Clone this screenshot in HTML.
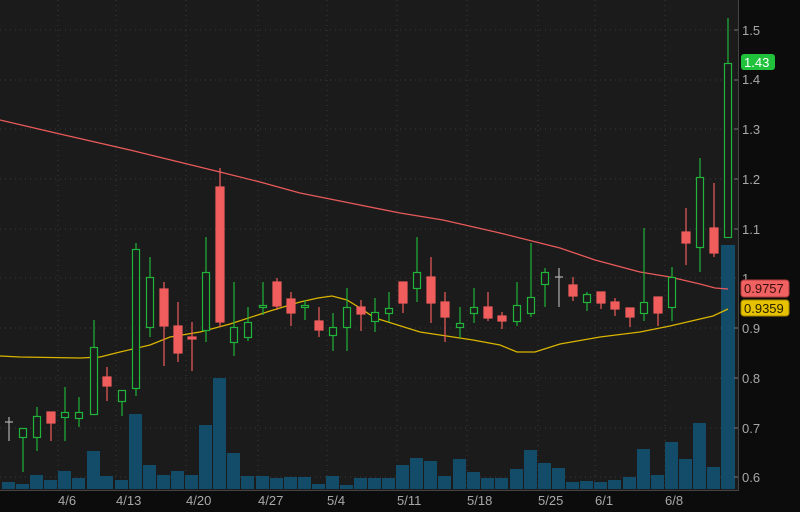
<!DOCTYPE html>
<html><head><meta charset="utf-8"><style>
html,body{margin:0;padding:0;background:#1b1b1b;}
svg{display:block;font-family:"Liberation Sans",sans-serif;}
</style></head><body>
<svg width="800" height="512" viewBox="0 0 800 512" xmlns="http://www.w3.org/2000/svg">
<rect x="0" y="0" width="800" height="512" fill="#1b1b1b"/>
<rect x="738" y="0" width="62" height="512" fill="#0c0c0c"/>
<rect x="0" y="490" width="800" height="22" fill="#0c0c0c"/>
<g stroke="#3a3a3a" stroke-width="1" stroke-dasharray="1,4">
<line x1="0" y1="30" x2="738" y2="30"/><line x1="0" y1="80" x2="738" y2="80"/><line x1="0" y1="129" x2="738" y2="129"/><line x1="0" y1="179" x2="738" y2="179"/><line x1="0" y1="229" x2="738" y2="229"/><line x1="0" y1="278" x2="738" y2="278"/><line x1="0" y1="328" x2="738" y2="328"/><line x1="0" y1="378" x2="738" y2="378"/><line x1="0" y1="428" x2="738" y2="428"/><line x1="0" y1="477" x2="738" y2="477"/>
<line x1="58" y1="0" x2="58" y2="490"/><line x1="116" y1="0" x2="116" y2="490"/><line x1="186" y1="0" x2="186" y2="490"/><line x1="258" y1="0" x2="258" y2="490"/><line x1="327" y1="0" x2="327" y2="490"/><line x1="397" y1="0" x2="397" y2="490"/><line x1="467" y1="0" x2="467" y2="490"/><line x1="538" y1="0" x2="538" y2="490"/><line x1="595" y1="0" x2="595" y2="490"/><line x1="665" y1="0" x2="665" y2="490"/>
</g>
<line x1="738.5" y1="0" x2="738.5" y2="490" stroke="#444"/>
<line x1="0" y1="490.5" x2="739" y2="490.5" stroke="#444"/>
<g fill="#134c69">
<rect x="2" y="482" width="13" height="7"/><rect x="16" y="484" width="13" height="5"/><rect x="30" y="475" width="13" height="14"/><rect x="44" y="480" width="13" height="9"/><rect x="58" y="471" width="13" height="18"/><rect x="72" y="478" width="13" height="11"/><rect x="87" y="451" width="13" height="38"/><rect x="100" y="476" width="13" height="13"/><rect x="115" y="480" width="13" height="9"/><rect x="129" y="414" width="13" height="75"/><rect x="143" y="465" width="13" height="24"/><rect x="157" y="475" width="13" height="14"/><rect x="171" y="471" width="13" height="18"/><rect x="185" y="475" width="13" height="14"/><rect x="199" y="425" width="13" height="64"/><rect x="213" y="378" width="13" height="111"/><rect x="227" y="453" width="13" height="36"/><rect x="241" y="476" width="13" height="13"/><rect x="256" y="476" width="13" height="13"/><rect x="270" y="478" width="13" height="11"/><rect x="284" y="477" width="13" height="12"/><rect x="298" y="477" width="13" height="12"/><rect x="312" y="484" width="13" height="5"/><rect x="326" y="476" width="13" height="13"/><rect x="340" y="485" width="13" height="4"/><rect x="354" y="478" width="13" height="11"/><rect x="368" y="478" width="13" height="11"/><rect x="382" y="478" width="13" height="11"/><rect x="396" y="465" width="13" height="24"/><rect x="410" y="458" width="13" height="31"/><rect x="424" y="461" width="13" height="28"/><rect x="438" y="476" width="13" height="13"/><rect x="453" y="459" width="13" height="30"/><rect x="467" y="472" width="13" height="17"/><rect x="481" y="478" width="13" height="11"/><rect x="495" y="478" width="13" height="11"/><rect x="510" y="469" width="13" height="20"/><rect x="524" y="450" width="13" height="39"/><rect x="538" y="463" width="13" height="26"/><rect x="552" y="468" width="13" height="21"/><rect x="566" y="482" width="13" height="7"/><rect x="580" y="481" width="13" height="8"/><rect x="594" y="482" width="13" height="7"/><rect x="608" y="480" width="13" height="9"/><rect x="623" y="477" width="13" height="12"/><rect x="637" y="449" width="13" height="40"/><rect x="651" y="475" width="13" height="14"/><rect x="665" y="442" width="13" height="47"/><rect x="679" y="459" width="13" height="30"/><rect x="693" y="423" width="13" height="66"/><rect x="707" y="467" width="13" height="22"/><rect x="721" y="245" width="14" height="244"/>
</g>
<polyline fill="none" stroke="#e85a5a" stroke-width="1.3" points="0,120 60,134 130,150 220,172 260,182 300,193 350,203 400,213 443,220 500,233 540,243 560,248 595,260 640,272 670,277 700,284 715,288 728,289"/>
<polyline fill="none" stroke="#d9b400" stroke-width="1.3" points="0,356 20,357 80,358 100,357 120,352 150,345 170,337 200,332 230,324 270,311 300,302 318,298 332,296 347,300 360,308 375,318 420,332 473,340 500,345 517,352 535,352 560,344 600,337 640,332 670,326 700,319 713,316 728,309"/>
<g stroke="#b0b0b0" stroke-width="1.2"><line x1="9" y1="417" x2="9" y2="441"/><line x1="5" y1="422" x2="13" y2="422"/><line x1="559" y1="268" x2="559" y2="307"/><line x1="555" y1="277" x2="563" y2="277"/></g>
<g stroke="#22b33a" stroke-width="1.2" fill="#1b1b1b">
<line x1="23" y1="428" x2="23" y2="472"/><rect x="19.5" y="428.5" width="7" height="9"/>
<line x1="37" y1="407" x2="37" y2="451"/><rect x="33.5" y="416.5" width="7" height="21"/>
<line x1="65" y1="387" x2="65" y2="441"/><rect x="61.5" y="412.5" width="7" height="5"/>
<line x1="79" y1="397" x2="79" y2="427"/><rect x="75.5" y="412.5" width="7" height="6"/>
<line x1="94" y1="320" x2="94" y2="414"/><rect x="90.5" y="347.5" width="7" height="67"/>
<line x1="122" y1="390" x2="122" y2="416"/><rect x="118.5" y="390.5" width="7" height="11"/>
<line x1="136" y1="243" x2="136" y2="396"/><rect x="132.5" y="249.5" width="7" height="139"/>
<line x1="150" y1="257" x2="150" y2="337"/><rect x="146.5" y="277.5" width="7" height="50"/>
<line x1="206" y1="237" x2="206" y2="342"/><rect x="202.5" y="272.5" width="7" height="58"/>
<line x1="234" y1="282" x2="234" y2="356"/><rect x="230.5" y="327.5" width="7" height="15"/>
<line x1="248" y1="307" x2="248" y2="341"/><rect x="244.5" y="322.5" width="7" height="15"/>
<line x1="263" y1="282" x2="263" y2="315"/><rect x="259.5" y="305.5" width="7" height="2"/>
<line x1="305" y1="300" x2="305" y2="320"/><rect x="301.5" y="305.5" width="7" height="2"/>
<line x1="333" y1="313" x2="333" y2="351"/><rect x="329.5" y="327.5" width="7" height="8"/>
<line x1="347" y1="288" x2="347" y2="351"/><rect x="343.5" y="307.5" width="7" height="20"/>
<line x1="375" y1="298" x2="375" y2="332"/><rect x="371.5" y="312.5" width="7" height="9"/>
<line x1="389" y1="292" x2="389" y2="322"/><rect x="385.5" y="308.5" width="7" height="5"/>
<line x1="417" y1="237" x2="417" y2="302"/><rect x="413.5" y="272.5" width="7" height="16"/>
<line x1="460" y1="307" x2="460" y2="338"/><rect x="456.5" y="323.5" width="7" height="4"/>
<line x1="474" y1="288" x2="474" y2="323"/><rect x="470.5" y="307.5" width="7" height="6"/>
<line x1="517" y1="282" x2="517" y2="326"/><rect x="513.5" y="305.5" width="7" height="16"/>
<line x1="531" y1="243" x2="531" y2="317"/><rect x="527.5" y="297.5" width="7" height="16"/>
<line x1="545" y1="268" x2="545" y2="307"/><rect x="541.5" y="272.5" width="7" height="12"/>
<line x1="587" y1="292" x2="587" y2="311"/><rect x="583.5" y="294.5" width="7" height="8"/>
<line x1="644" y1="228" x2="644" y2="321"/><rect x="640.5" y="302.5" width="7" height="11"/>
<line x1="672" y1="267" x2="672" y2="321"/><rect x="668.5" y="277.5" width="7" height="30"/>
<line x1="700" y1="158" x2="700" y2="272"/><rect x="696.5" y="177.5" width="7" height="70"/>
<line x1="728" y1="18" x2="728" y2="237"/><rect x="724.5" y="63.5" width="7" height="174"/>
</g>
<g stroke="#f05d5d" stroke-width="1.2" fill="#f05d5d">
<line x1="51" y1="412" x2="51" y2="441"/><rect x="47" y="412" width="8" height="11"/>
<line x1="107" y1="367" x2="107" y2="401"/><rect x="103" y="377" width="8" height="9"/>
<line x1="164" y1="282" x2="164" y2="366"/><rect x="160" y="289" width="8" height="37"/>
<line x1="178" y1="302" x2="178" y2="362"/><rect x="174" y="326" width="8" height="27"/>
<line x1="192" y1="322" x2="192" y2="371"/><rect x="188" y="337" width="8" height="2"/>
<line x1="220" y1="168" x2="220" y2="327"/><rect x="216" y="187" width="8" height="135"/>
<line x1="277" y1="278" x2="277" y2="310"/><rect x="273" y="282" width="8" height="24"/>
<line x1="291" y1="292" x2="291" y2="326"/><rect x="287" y="299" width="8" height="14"/>
<line x1="319" y1="307" x2="319" y2="337"/><rect x="315" y="321" width="8" height="9"/>
<line x1="361" y1="300" x2="361" y2="331"/><rect x="357" y="307" width="8" height="7"/>
<line x1="403" y1="282" x2="403" y2="313"/><rect x="399" y="282" width="8" height="21"/>
<line x1="431" y1="257" x2="431" y2="323"/><rect x="427" y="277" width="8" height="26"/>
<line x1="445" y1="292" x2="445" y2="342"/><rect x="441" y="302" width="8" height="15"/>
<line x1="488" y1="292" x2="488" y2="321"/><rect x="484" y="307" width="8" height="11"/>
<line x1="502" y1="312" x2="502" y2="329"/><rect x="498" y="316" width="8" height="5"/>
<line x1="573" y1="277" x2="573" y2="301"/><rect x="569" y="285" width="8" height="11"/>
<line x1="601" y1="292" x2="601" y2="309"/><rect x="597" y="292" width="8" height="11"/>
<line x1="615" y1="298" x2="615" y2="316"/><rect x="611" y="302" width="8" height="7"/>
<line x1="630" y1="308" x2="630" y2="327"/><rect x="626" y="308" width="8" height="9"/>
<line x1="658" y1="297" x2="658" y2="326"/><rect x="654" y="297" width="8" height="16"/>
<line x1="686" y1="208" x2="686" y2="265"/><rect x="682" y="232" width="8" height="11"/>
<line x1="714" y1="183" x2="714" y2="257"/><rect x="710" y="228" width="8" height="25"/>
</g>
<g fill="#a8a8a8" font-size="13">
<text x="742" y="35">1.5</text><text x="742" y="84">1.4</text><text x="742" y="134">1.3</text><text x="742" y="184">1.2</text><text x="742" y="234">1.1</text><text x="742" y="283">1</text><text x="742" y="333">0.9</text><text x="742" y="383">0.8</text><text x="742" y="433">0.7</text><text x="742" y="482">0.6</text>
</g>
<g stroke="#777"><line x1="734" y1="30" x2="738" y2="30"/><line x1="734" y1="80" x2="738" y2="80"/><line x1="734" y1="129" x2="738" y2="129"/><line x1="734" y1="179" x2="738" y2="179"/><line x1="734" y1="229" x2="738" y2="229"/><line x1="734" y1="328" x2="738" y2="328"/><line x1="734" y1="378" x2="738" y2="378"/><line x1="734" y1="428" x2="738" y2="428"/><line x1="734" y1="477" x2="738" y2="477"/></g>
<rect x="741" y="54" width="34" height="16" rx="3" fill="#1fc23a"/>
<text x="744" y="67" font-size="13" fill="#fff">1.43</text>
<rect x="741" y="280" width="48" height="17" rx="3" fill="#f06262" stroke="#b03a3a"/>
<text x="744" y="293" font-size="13" fill="#3a0d0d">0.9757</text>
<rect x="741" y="300" width="48" height="16" rx="3" fill="#e6c200" stroke="#a08600"/>
<text x="744" y="313" font-size="13" fill="#2a2300">0.9359</text>
<g fill="#a8a8a8" font-size="13">
<text x="58" y="505">4/6</text><text x="116" y="505">4/13</text><text x="186" y="505">4/20</text><text x="258" y="505">4/27</text><text x="327" y="505">5/4</text><text x="397" y="505">5/11</text><text x="467" y="505">5/18</text><text x="538" y="505">5/25</text><text x="595" y="505">6/1</text><text x="665" y="505">6/8</text>
</g>
</svg>
</body></html>
